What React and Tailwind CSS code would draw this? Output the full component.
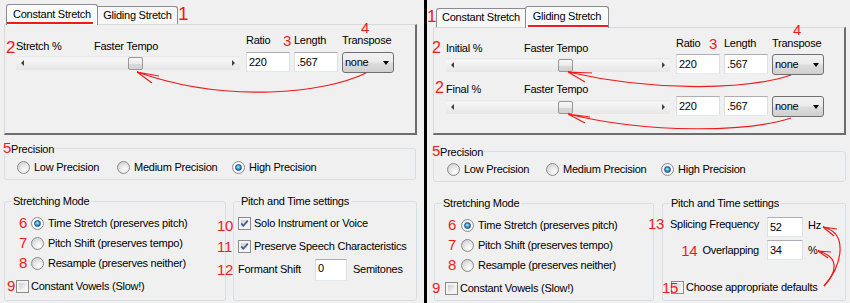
import React from 'react';

const red = 'text-[#f01a1a]';
const groupBox = 'rounded-[3px] border border-[#d5dfe5]';
const panelBox =
  'flex border-b-2 border-l border-r-2 border-t border-b-[#6d6d6d] border-l-[#d9d9d9] border-r-[#6d6d6d] border-t-[#d9d9d9]';

function Radio({ checked }) {
  return (
    <span
      className={
        'flex h-[13px] w-[13px] shrink-0 items-center justify-center rounded-full border border-[#8b8b8b] ' +
        (checked
          ? 'bg-[radial-gradient(circle,#ffffff_55%,#d9d9d9_100%)]'
          : 'bg-[radial-gradient(circle_at_65%_70%,#ffffff_0%,#ececec_35%,#c6c6c6_100%)]')
      }
    >
      {checked && (
        <span className="h-[7px] w-[7px] rounded-full border border-[#174a7c] bg-[radial-gradient(circle_at_45%_40%,#b5ecff_0%,#3aa3e4_45%,#0c4784_100%)]" />
      )}
    </span>
  );
}

function Check({ checked }) {
  return (
    <span className="relative block h-[13px] w-[13px] shrink-0 border border-[#8b8b8b] bg-[#f4f4f4] p-[2px]">
      <span className="block h-full w-full bg-[linear-gradient(135deg,#c9cdd3,#eeeeee_70%,#fafafa)]" />
      {checked && (
        <svg className="absolute left-0 top-0" width="11" height="11" viewBox="0 0 11 11">
          <path d="M2.2 5.4 L4.3 7.8 L8.8 2.6" fill="none" stroke="#3f5b95" strokeWidth="1.7" />
        </svg>
      )}
    </span>
  );
}

function Scroll() {
  return (
    <div className="flex h-[14px] w-[224px] items-center bg-[linear-gradient(#e4e4e4,#f6f6f6_15%,#efefef_55%,#e6e6e6)]">
      <span className="ml-[5px] h-0 w-0 border-y-[3px] border-r-[3px] border-y-transparent border-r-[#404040]" />
      <span className="ml-[104px] h-[13px] w-[15px] rounded-[2px] border border-[#979797] bg-[linear-gradient(#f7f7f7,#ebebeb_50%,#d9d9d9_51%,#d2d2d2)]" />
      <span className="ml-auto mr-[5px] h-0 w-0 border-y-[3px] border-l-[3px] border-y-transparent border-l-[#404040]" />
    </div>
  );
}

function Field({ value, className }) {
  return (
    <div
      className={
        'flex h-[20px] items-center border border-b-[#e3e9ef] border-l-[#dcdfe5] border-r-[#dcdfe5] border-t-[#abadb3] bg-white pl-[2px] ' +
        className
      }
    >
      {value}
    </div>
  );
}

function Combo({ className }) {
  return (
    <div
      className={
        'flex h-[21px] w-[52px] items-center rounded-[3px] border border-[#707070] bg-[linear-gradient(#f2f2f2,#ebebeb_48%,#dddddd_52%,#cfcfcf)] pl-[2px] pr-[4px] ' +
        className
      }
    >
      <span>none</span>
      <span className="ml-auto h-0 w-0 border-x-[3.5px] border-t-[4px] border-x-transparent border-t-black" />
    </div>
  );
}

function RadioItem({ w, label, checked }) {
  return (
    <div className={'flex h-[13px] items-center ' + w}>
      <Radio checked={checked} />
      <span className="ml-[4px]">{label}</span>
    </div>
  );
}

function ModeRow({ n, nl, label, checked }) {
  return (
    <div className="relative flex h-[20px] items-center pl-[26px]">
      <span className={red + ' absolute top-0 z-10 text-[15px] leading-[20px] ' + nl}>{n}</span>
      <Radio checked={checked} />
      <span className="ml-[4px]">{label}</span>
    </div>
  );
}

function LeftPane() {
  return (
    <div className="flex w-[424px] shrink-0 flex-col">
      <div className="flex h-[24px] items-end pl-[6px]">
        <div className="relative z-10 -mb-px h-[21px] w-[92px] rounded-t-[3px] border border-b-0 border-[#898c95] bg-[#fbfbfb] pt-[3px] text-center leading-[13px]">
          Constant Stretch
          <span className="absolute bottom-[1px] left-0 right-[4px] h-[2px] bg-[#f01a1a]" />
        </div>
        <div className="h-[18px] w-[80px] rounded-tr-[3px] border border-b-0 border-l-0 border-[#898c95] bg-[#f7f7f7] pt-[2px] text-center leading-[13px]">
          Gliding Stretch
        </div>
        <span className={red + ' mt-[4px] self-start text-[19px] leading-[19px]'}>1</span>
      </div>

      <div className={panelBox + ' ml-[4px] h-[111px] w-[413px] pl-[11px]'}>
        <div className="mt-[15px] w-[224px]">
          <div className="relative flex h-[13px] leading-[13px]">
            <span className={red + ' absolute left-[-10px] top-[-1px] text-[17px] leading-[17px]'}>2</span>
            <span className="w-[78px]">Stretch %</span>
            <span>Faster Tempo</span>
          </div>
          <div className="mt-[3px]">
            <Scroll />
          </div>
        </div>
        <div className="ml-[6px] mt-[9px] w-[44px]">
          <div className="h-[13px] leading-[13px]">Ratio</div>
          <Field value="220" className="mt-[5px] w-full" />
        </div>
        <div className="relative ml-[4px] mt-[9px] w-[44px]">
          <span className={red + ' absolute left-[-11px] top-[-1px] text-[15px] leading-[15px]'}>3</span>
          <div className="h-[13px] leading-[13px]">Length</div>
          <Field value=".567" className="mt-[5px] w-full" />
        </div>
        <div className="relative ml-[4px] mt-[9px] w-[52px]">
          <span className={red + ' absolute left-[19px] top-[-14px] text-[15px] leading-[15px]'}>4</span>
          <div className="h-[13px] leading-[13px]">Transpose</div>
          <Combo className="mt-[5px]" />
        </div>
      </div>

      <fieldset className={groupBox + ' ml-[4px] mt-[6px] h-[39px] w-[412px]'}>
        <legend className="-ml-[2px] leading-[14px]">
          <span className={red + ' text-[15px] leading-[14px]'}>5</span>Precision
        </legend>
        <div className="flex pl-[12px] pt-[5px]">
          <RadioItem w="w-[100px]" label="Low Precision" />
          <RadioItem w="w-[115px]" label="Medium Precision" />
          <RadioItem checked label="High Precision" />
        </div>
      </fieldset>

      <div className="ml-[4px] mt-[14px] flex gap-[7px]">
        <fieldset className={groupBox + ' h-[107px] w-[222px]'}>
          <legend className="ml-[7px] pl-[1px] pr-[2px] leading-[14px]">Stretching Mode</legend>
          <div className="pt-[5px]">
            <ModeRow n="6" nl="left-[14px]" checked label="Time Stretch (preserves pitch)" />
            <ModeRow n="7" nl="left-[14px]" label="Pitch Shift (preserves tempo)" />
            <ModeRow n="8" nl="left-[14px]" label="Resample (preserves neither)" />
            <div className="relative mt-[3px] flex h-[20px] items-center pl-[11px]">
              <span className={red + ' absolute left-[2px] top-0 z-10 text-[15px] leading-[20px]'}>9</span>
              <Check />
              <span className="ml-[2px]">Constant Vowels (Slow!)</span>
            </div>
          </div>
        </fieldset>
        <fieldset className={groupBox + ' h-[107px] w-[184px]'}>
          <legend className="ml-[6px] pl-[1px] pr-[2px] leading-[14px]">Pitch and Time settings</legend>
          <div className="pt-[4px]">
            <div className="relative flex h-[23px] items-center pl-[4px]">
              <span className={red + ' absolute left-[-17px] top-[2px] z-10 text-[15px] leading-[23px]'}>10</span>
              <Check checked />
              <span className="ml-[3px]">Solo Instrument or Voice</span>
            </div>
            <div className="relative flex h-[23px] items-center pl-[4px]">
              <span className={red + ' absolute left-[-17px] top-0 z-10 text-[15px] leading-[23px]'}>11</span>
              <Check checked />
              <span className="ml-[3px] whitespace-nowrap">Preserve Speech Characteristics</span>
            </div>
            <div className="relative flex h-[23px] items-center pl-[4px]">
              <span className={red + ' absolute left-[-17px] top-0 z-10 text-[15px] leading-[23px]'}>12</span>
              <span className="w-[77px]">Formant Shift</span>
              <div className="h-[22px] w-[32px] border border-b-[#e3e9ef] border-l-[#dcdfe5] border-r-[#dcdfe5] border-t-[#abadb3] bg-white pl-[2px] pt-[2px] leading-[13px]">
                0
              </div>
              <span className="ml-[6px]">Semitones</span>
            </div>
          </div>
        </fieldset>
      </div>
    </div>
  );
}

function RightPane() {
  return (
    <div className="flex w-[423px] shrink-0 flex-col">
      <div className="relative flex h-[27px] items-end pl-[9px]">
        <span className={red + ' absolute left-0 top-[8px] text-[17px] leading-[17px]'}>1</span>
        <div className="h-[19px] w-[89px] rounded-tl-[3px] border border-b-0 border-r-0 border-[#898c95] bg-[#f7f7f7] pt-[2px] text-center leading-[13px]">
          Constant Stretch
        </div>
        <div className="relative z-10 -mb-px h-[22px] w-[84px] rounded-t-[3px] border border-b-0 border-[#898c95] bg-[#fbfbfb] pt-[3px] text-center leading-[13px]">
          Gliding Stretch
          <span className="absolute bottom-[1px] left-[2px] right-0 h-[2px] bg-[#f01a1a]" />
        </div>
      </div>

      <div className={panelBox + ' ml-[6px] h-[108px] w-[413px] pl-[12px]'}>
        <div className="mt-[14px] w-[224px]">
          <div className="relative flex h-[13px] leading-[13px]">
            <span className={red + ' absolute left-[-14px] top-[-2px] text-[16px] leading-[16px]'}>2</span>
            <span className="w-[78px]">Initial %</span>
            <span>Faster Tempo</span>
          </div>
          <div className="mt-[3px]">
            <Scroll />
          </div>
          <div className="relative mt-[11px] flex h-[13px] leading-[13px]">
            <span className={red + ' absolute left-[-11px] top-[-3px] text-[16px] leading-[16px]'}>2</span>
            <span className="w-[78px]">Final %</span>
            <span>Faster Tempo</span>
          </div>
          <div className="mt-[4px]">
            <Scroll />
          </div>
        </div>
        <div className="ml-[6px] mt-[9px] w-[44px]">
          <div className="h-[13px] leading-[13px]">Ratio</div>
          <Field value="220" className="mt-[4px] w-full" />
          <Field value="220" className="mt-[22px] w-full" />
        </div>
        <div className="relative ml-[4px] mt-[9px] w-[44px]">
          <span className={red + ' absolute left-[-15px] top-[-1px] text-[15px] leading-[15px]'}>3</span>
          <div className="h-[13px] leading-[13px]">Length</div>
          <Field value=".567" className="mt-[4px] w-full" />
          <Field value=".567" className="mt-[22px] w-full" />
        </div>
        <div className="relative ml-[4px] mt-[9px] w-[52px]">
          <span className={red + ' absolute left-[21px] top-[-15px] text-[15px] leading-[15px]'}>4</span>
          <div className="h-[13px] leading-[13px]">Transpose</div>
          <Combo className="mt-[4px]" />
          <Combo className="mt-[21px]" />
        </div>
      </div>

      <fieldset className={groupBox + ' ml-[6px] mt-[9px] h-[38px] w-[413px]'}>
        <legend className="-ml-[2px] leading-[14px]">
          <span className={red + ' text-[15px] leading-[14px]'}>5</span>Precision
        </legend>
        <div className="flex pl-[13px] pt-[4px]">
          <RadioItem w="w-[99px]" label="Low Precision" />
          <RadioItem w="w-[115px]" label="Medium Precision" />
          <RadioItem checked label="High Precision" />
        </div>
      </fieldset>

      <div className="ml-[7px] mt-[14px] flex gap-[8px]">
        <fieldset className={groupBox + ' h-[105px] w-[220px]'}>
          <legend className="ml-[7px] pl-[1px] pr-[2px] leading-[14px]">Stretching Mode</legend>
          <div className="pt-[5px]">
            <ModeRow n="6" nl="left-[13px]" checked label="Time Stretch (preserves pitch)" />
            <ModeRow n="7" nl="left-[13px]" label="Pitch Shift (preserves tempo)" />
            <ModeRow n="8" nl="left-[13px]" label="Resample (preserves neither)" />
            <div className="relative mt-[3px] flex h-[20px] items-center pl-[10px]">
              <span className={red + ' absolute left-[-3px] top-0 z-10 text-[15px] leading-[20px]'}>9</span>
              <Check />
              <span className="ml-[2px]">Constant Vowels (Slow!)</span>
            </div>
          </div>
        </fieldset>
        <fieldset className={groupBox + ' h-[105px] w-[184px]'}>
          <legend className="ml-[7px] pl-[1px] pr-[2px] leading-[14px]">Pitch and Time settings</legend>
          <div className="relative mt-[7px] flex h-[20px] items-start pl-[7px]">
            <span className={red + ' absolute left-[-15px] top-[-3px] z-10 text-[15px] leading-[20px]'}>13</span>
            <span className="w-[97px] pt-[1px] leading-[13px]">Splicing Frequency</span>
            <Field value="52" className="w-[36px]" />
            <span className="ml-[5px] pt-[2px] leading-[13px]">Hz</span>
          </div>
          <div className="mt-[3px] flex h-[20px] items-start">
            <div className="flex w-[104px] justify-end pr-[8px] pt-[4px] leading-[13px]">
              <span className={red + ' text-[15px] leading-[13px]'}>14</span>
              <span className="ml-[5px]">Overlapping</span>
            </div>
            <Field value="34" className="w-[36px]" />
            <span className="ml-[5px] pt-[4px] leading-[13px]">%</span>
          </div>
          <div className="relative mt-[21px] flex h-[13px] items-center pl-[8px]">
            <span className={red + ' absolute left-[-1px] top-0 z-10 text-[15px] leading-[13px]'}>15</span>
            <Check />
            <span className="ml-[2px] whitespace-nowrap">Choose appropriate defaults</span>
          </div>
        </fieldset>
      </div>
    </div>
  );
}

function Arrows() {
  return (
    <svg
      className="pointer-events-none absolute left-0 top-0 z-20"
      width="850"
      height="303"
      viewBox="0 0 850 303"
      fill="none"
      stroke="#f01a1a"
      strokeWidth="1.2"
    >
      <path d="M366 73 C325 93 228 104 137 72 M137 72 L159 76 M137 72 L152 83" />
      <path d="M791 75 C750 89 660 93 568 72 M568 72 L592 73 M568 72 L585 82" />
      <path d="M791 118 C748 132 650 134 568 114 M568 114 L590 117 M568 114 L585 123" />
      <path d="M824 286 C842 266 849 233 823 227 M823 227 L837 229 M823 227 L834 236" />
      <path d="M824 286 C836 273 841 257 818 251 M818 251 L831 252 M818 251 L828 258" />
    </svg>
  );
}

export default function App() {
  return (
    <div className="relative flex h-[303px] w-[850px] overflow-hidden bg-[#f0f0f0] font-['Liberation_Sans',Arial,sans-serif] text-[11px] tracking-[-0.25px] text-black">
      <LeftPane />
      <div className="w-[3px] shrink-0 bg-black" />
      <RightPane />
      <Arrows />
    </div>
  );
}
